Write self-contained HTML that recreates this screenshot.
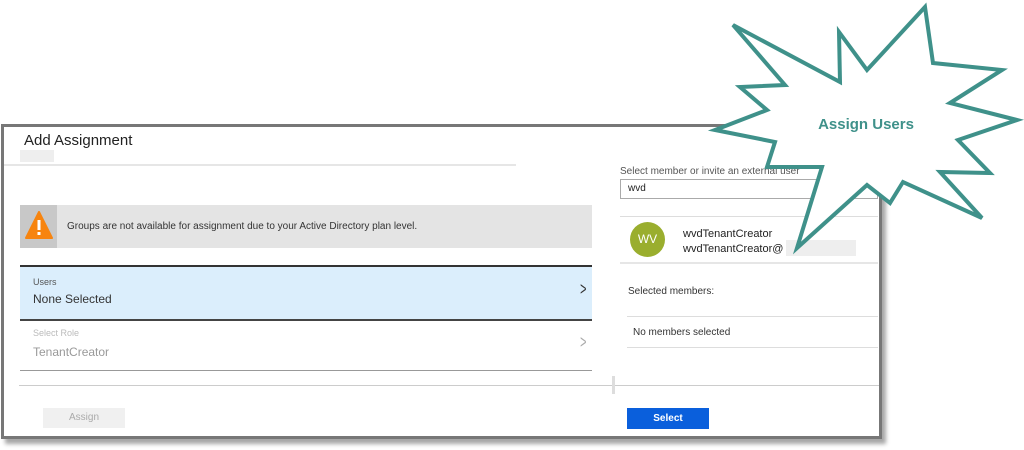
<!DOCTYPE html><html><head><style>
body{margin:0;width:1024px;height:450px;background:#fff;position:relative;overflow:hidden;font-family:"Liberation Sans",sans-serif;color:#222}
.a{position:absolute}
</style></head><body>
<div class="a" style="left:1px;top:124px;width:875px;height:309px;border:3px solid #777;background:#fff;box-shadow:4px 5px 4px rgba(0,0,0,.35)"></div>
<div class="a" style="left:24px;top:132px;font-size:15px;color:#222">Add Assignment</div>
<div class="a" style="left:20px;top:150px;width:34px;height:12px;background:#eee"></div>
<div class="a" style="left:4px;top:164px;width:512px;height:2px;background:#e6e6e6"></div>
<div class="a" style="left:24px;top:205px;width:568px;height:43px;background:#e4e4e4"></div>
<div class="a" style="left:20px;top:205px;width:37px;height:43px;background:#c8c8c8"></div>
<svg class="a" style="left:25px;top:210px" width="28" height="30"><path d="M14 2 L27 28 L1 28 Z" fill="#f7840f" stroke="#f7840f" stroke-linejoin="round" stroke-width="2"/><rect x="12.5" y="10" width="3" height="10" fill="#fff"/><rect x="12.5" y="22" width="3" height="3" fill="#fff"/></svg>
<div class="a" style="left:67px;top:221px;font-size:10px;color:#333">Groups are not available for assignment due to your Active Directory plan level.</div>
<div class="a" style="left:20px;top:265px;width:572px;height:52px;background:#dbeefc;border-top:2px solid #333;border-bottom:2px solid #444"></div>
<div class="a" style="left:33px;top:277px;font-size:9px;color:#555">Users</div>
<div class="a" style="left:33px;top:292px;font-size:12px;color:#333">None Selected</div>
<div class="a" style="left:578px;top:279px;font-size:18px;color:#333;transform:scaleX(.6)">&gt;</div>
<div class="a" style="left:33px;top:328px;font-size:9px;color:#bbb">Select Role</div>
<div class="a" style="left:33px;top:345px;font-size:12px;color:#999">TenantCreator</div>
<div class="a" style="left:578px;top:332px;font-size:18px;color:#aaa;transform:scaleX(.6)">&gt;</div>
<div class="a" style="left:20px;top:370px;width:572px;height:1px;background:#999"></div>
<div class="a" style="left:19px;top:385px;width:860px;height:1px;background:#ccc"></div>
<div class="a" style="left:612px;top:376px;width:3px;height:18px;background:#ddd"></div>
<div class="a" style="left:43px;top:408px;width:82px;height:20px;background:#f0f0f0;color:#aaa;font-size:10px;text-align:center;line-height:20px">Assign</div>
<div class="a" style="left:620px;top:166px;font-size:10px;color:#555">Select member or invite an external user</div>
<div class="a" style="left:620px;top:179px;width:256px;height:18px;border:1px solid #aaa;font-size:10px;line-height:18px;text-indent:7px">wvd</div>
<div class="a" style="left:620px;top:216px;width:258px;height:1px;background:#ddd"></div>
<div class="a" style="left:630px;top:222px;width:35px;height:35px;border-radius:50%;background:#9aae2e;color:#fff;font-size:12px;text-align:center;line-height:35px">WV</div>
<div class="a" style="left:683px;top:228px;font-size:11px;color:#222">wvdTenantCreator</div>
<div class="a" style="left:683px;top:243px;font-size:11px;color:#222">wvdTenantCreator@</div>
<div class="a" style="left:786px;top:240px;width:70px;height:16px;background:#eee"></div>
<div class="a" style="left:620px;top:262px;width:258px;height:2px;background:#e6e6e6"></div>
<div class="a" style="left:628px;top:286px;font-size:10px;color:#333">Selected members:</div>
<div class="a" style="left:627px;top:316px;width:251px;height:1px;background:#ddd"></div>
<div class="a" style="left:633px;top:327px;font-size:10px;color:#333">No members selected</div>
<div class="a" style="left:627px;top:347px;width:251px;height:1px;background:#ddd"></div>
<div class="a" style="left:627px;top:408px;width:82px;height:21px;background:#0a5fdc;color:#fff;font-size:10px;font-weight:bold;text-align:center;line-height:21px">Select</div>
<svg class="a" style="left:0;top:0" width="1024" height="450"><path d="M733 25 L840 82 L839 32 L867 70 L925 7 L933 63 L1002 70 L950 103 L1017 120 L958 140 L990 173 L940 172 L982 218 L903 182 L890 203 L867 185 L797 248 L822 167 L767 167 L775 142 L715 130 L767 110 L740 87 L785 85 Z" fill="#fff" stroke="#3f918a" stroke-width="4" stroke-linejoin="miter"/>
<text x="866" y="129" text-anchor="middle" font-family="Liberation Sans" font-weight="bold" font-size="15" fill="#3f918a">Assign Users</text></svg>
</body></html>
